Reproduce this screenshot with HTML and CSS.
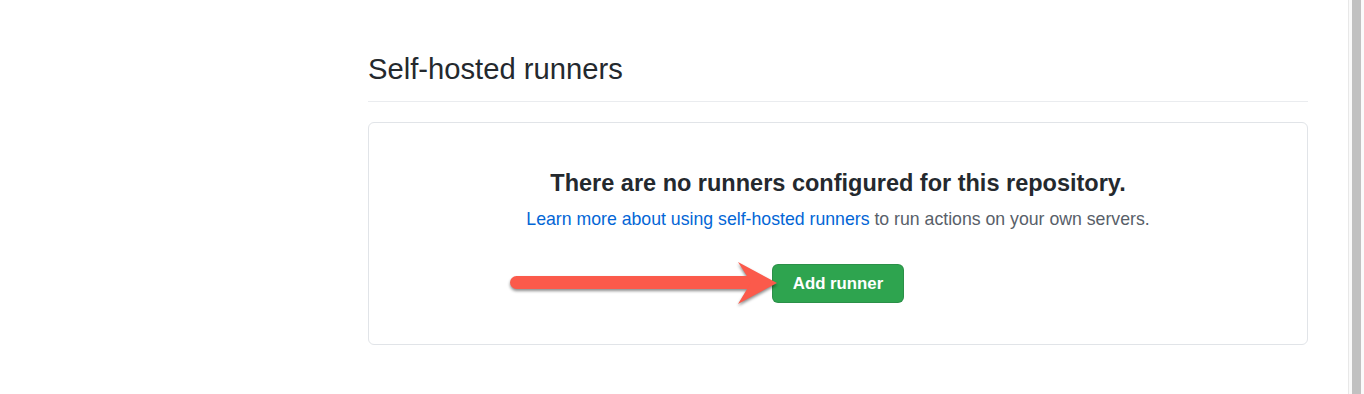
FILE: index.html
```html
<!DOCTYPE html>
<html lang="en">
<head>
    <meta charset="UTF-8">
    <meta name="viewport" content="width=device-width, initial-scale=1.0">
    <title>Self-hosted runners</title>
    <link rel="stylesheet" href="styles.css">
</head>
<body>
    <div class="window">
        <div class="page">
            <aside class="sidebar"></aside>

            <main class="content">
                <div class="subhead">
                    <h2 class="subhead-heading">Self-hosted runners</h2>
                </div>

                <div class="blankslate">
                    <h3>There are no runners configured for this repository.</h3>
                    <p><a href="#">Learn more about using self-hosted runners</a> to run actions on your own servers.</p>
                    <div class="actions">
                        <a href="#" class="btn btn-primary">Add runner</a>
                    </div>

                    <!-- Annotation arrow pointing at the button -->
                    <svg class="callout-arrow" width="280" height="58" viewBox="0 0 280 58">
                        <line x1="11.5" y1="26.5" x2="244" y2="26.5" />
                        <polygon points="272,27 233,6 246,26.5 233,48" />
                    </svg>
                </div>
            </main>
        </div>

        <div class="scrollbar">
            <div class="scrollbar-thumb"></div>
        </div>
    </div>
</body>
</html>
```

FILE: styles.css
```css
/* General Styles */
:root {
    --text-color: #24292e;
    --muted-color: #586069;
    --link-color: #0366d6;
    --border-color: #e1e4e8;
    --button-bg-color: #2ea44f;
    --arrow-color: #fb5a4b;
    --border-radius: 6px;
}

body {
    font-family: "Liberation Sans", Arial, sans-serif;
    color: var(--text-color);
    background-color: #fff;
    margin: 0;
}

.window {
    display: flex;
    height: 100vh;
    overflow: hidden;
}

.page {
    flex: 1;
    display: flex;
    padding-top: 51px;
}

.sidebar {
    width: 368px;
    flex-shrink: 0;
}

.content {
    width: 940px;
    flex-shrink: 0;
}

/* Subhead */
.subhead {
    padding-bottom: 14px;
    border-bottom: 1px solid #eaecef;
    margin-bottom: 20px;
}

.subhead-heading {
    margin: 0;
    font-size: 29.2px;
    line-height: 36px;
    font-weight: 400;
}

/* Blankslate */
.blankslate {
    position: relative;
    padding: 45px 38px 41px;
    text-align: center;
    border: 1px solid var(--border-color);
    border-radius: var(--border-radius);
}

.blankslate h3 {
    margin: 0;
    font-size: 23.5px;
    line-height: 30px;
    font-weight: 700;
}

.blankslate p {
    margin: 9px 0 0;
    font-size: 17.7px;
    line-height: 25px;
    color: var(--muted-color);
}

.blankslate a {
    color: var(--link-color);
    text-decoration: none;
}

.actions {
    margin-top: 32px;
}

.btn {
    display: inline-block;
    box-sizing: border-box;
    height: 39px;
    padding: 0 20px;
    line-height: 37px;
    font-size: 16.8px;
    font-weight: 700;
    border: 1px solid rgba(27, 31, 35, 0.15);
    border-radius: var(--border-radius);
}

.blankslate .btn-primary {
    color: #fff;
    background-color: var(--button-bg-color);
}

/* Arrow annotation */
.callout-arrow {
    position: absolute;
    left: 136px;
    top: 133px;
    overflow: visible;
    filter: drop-shadow(0 2px 1.5px rgba(0, 0, 0, 0.45));
}

.callout-arrow line {
    stroke: var(--arrow-color);
    stroke-width: 13;
    stroke-linecap: round;
}

.callout-arrow polygon {
    fill: var(--arrow-color);
}

/* Scrollbar */
.scrollbar {
    width: 16px;
    flex-shrink: 0;
    box-sizing: border-box;
    border-left: 1px solid #e8e8e8;
    background-color: #fafafa;
    padding-left: 3px;
}

.scrollbar-thumb {
    width: 9px;
    height: 100%;
    background-color: #c1c1c1;
}
```
